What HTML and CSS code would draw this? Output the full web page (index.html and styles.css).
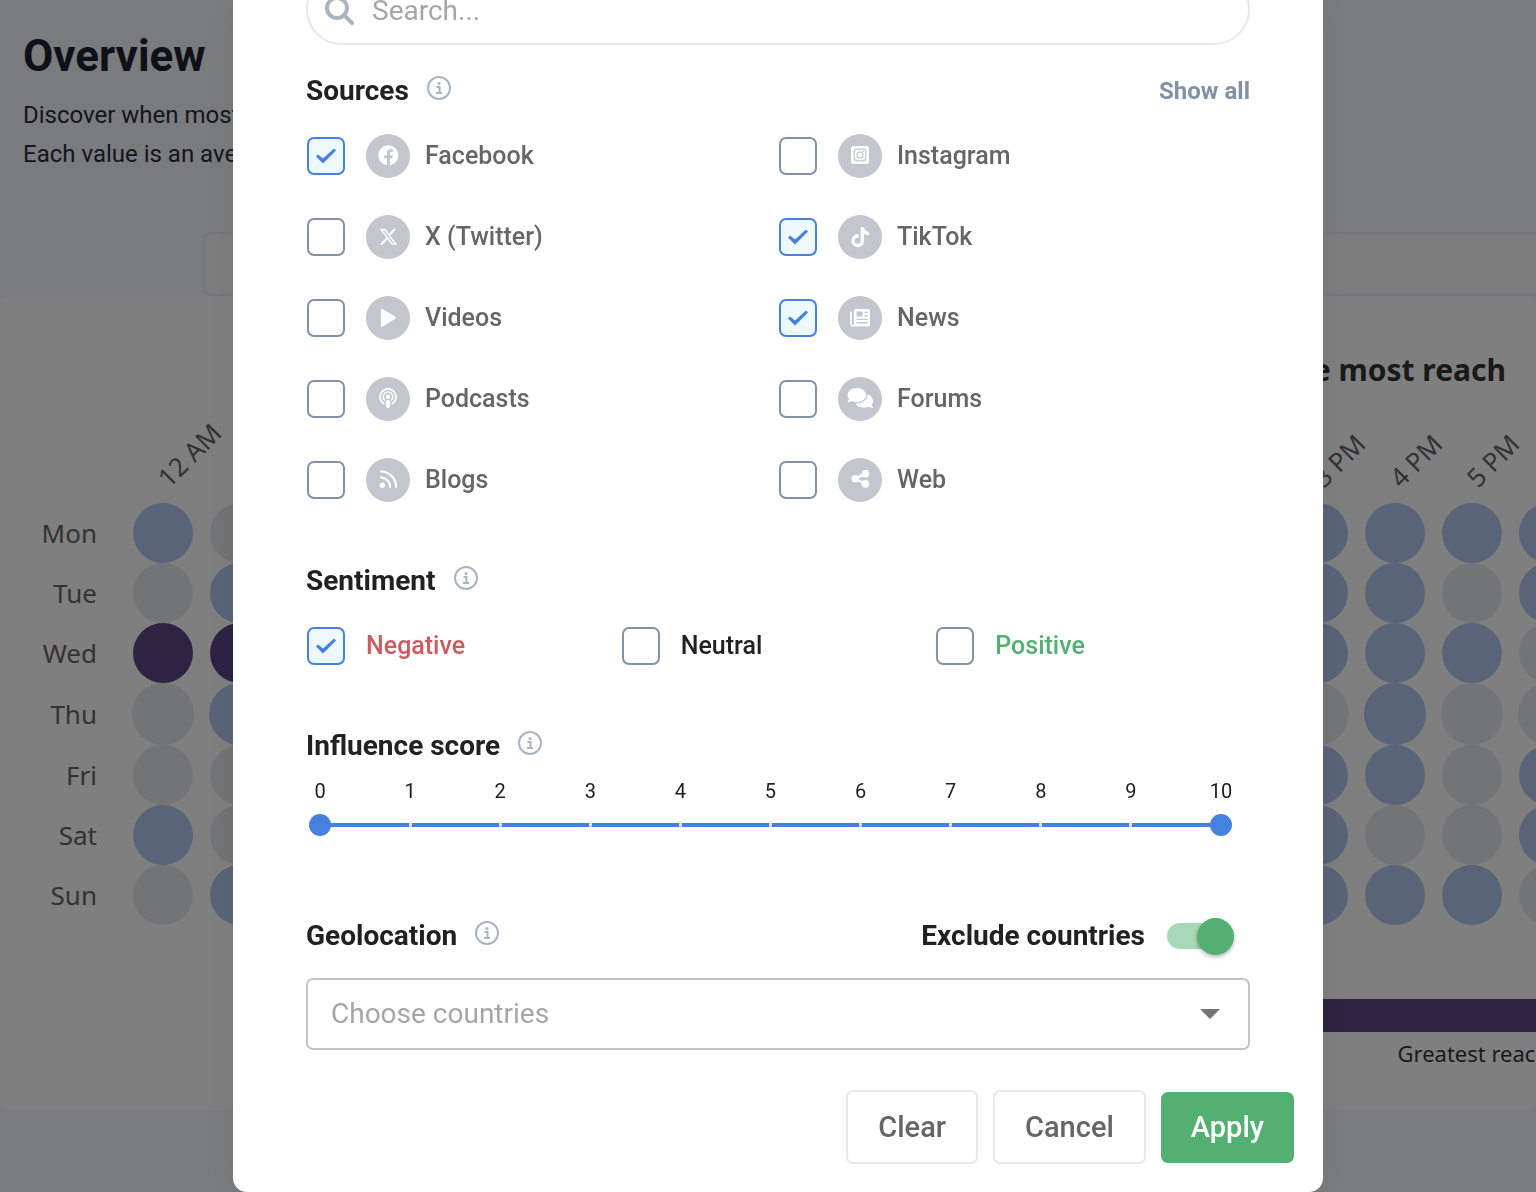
FILE: index.html
```html
<!DOCTYPE html>
<html lang="en">
<head>
<meta charset="utf-8">
<meta name="viewport" content="width=device-width, initial-scale=1">
<title>Overview</title>
<link rel="stylesheet" href="styles.css">
</head>
<body>
<main class="page">
  <header class="page-header">
    <h1 class="page-title">Overview</h1>
    <p class="page-intro">Discover when most<br>Each value is an average</p>
  </header>
  <div class="toolbar"></div>
  <section class="card">
    <h2 class="card-title">the most reach</h2>
    <table class="heatmap">
      <thead>
        <tr><td class="corner"></td><th><span>12 AM</span></th><th><span>1 AM</span></th><th></th><th></th><th></th><th></th><th></th><th></th><th></th><th></th><th></th><th></th><th></th><th></th><th></th><th><span>3 PM</span></th><th><span>4 PM</span></th><th><span>5 PM</span></th><th></th></tr>
      </thead>
      <tbody>
        <tr><th>Mon</th><td class="mid"></td><td></td><td></td><td></td><td></td><td></td><td></td><td></td><td></td><td></td><td></td><td></td><td></td><td></td><td></td><td class="mid"></td><td class="mid"></td><td class="mid"></td><td class="mid"></td></tr>
        <tr><th>Tue</th><td></td><td class="mid"></td><td></td><td></td><td></td><td></td><td></td><td></td><td></td><td></td><td></td><td></td><td></td><td></td><td></td><td class="mid"></td><td class="mid"></td><td></td><td class="mid"></td></tr>
        <tr><th>Wed</th><td class="high"></td><td class="high"></td><td></td><td></td><td></td><td></td><td></td><td></td><td></td><td></td><td></td><td></td><td></td><td></td><td></td><td class="mid"></td><td class="mid"></td><td class="mid"></td><td></td></tr>
        <tr class="today"><th>Thu</th><td></td><td class="mid"></td><td></td><td></td><td></td><td></td><td></td><td></td><td></td><td></td><td></td><td></td><td></td><td></td><td></td><td></td><td class="mid"></td><td></td><td></td></tr>
        <tr><th>Fri</th><td></td><td></td><td></td><td></td><td></td><td></td><td></td><td></td><td></td><td></td><td></td><td></td><td></td><td></td><td></td><td class="mid"></td><td class="mid"></td><td></td><td class="mid"></td></tr>
        <tr><th>Sat</th><td class="mid"></td><td></td><td></td><td></td><td></td><td></td><td></td><td></td><td></td><td></td><td></td><td></td><td></td><td></td><td></td><td class="mid"></td><td></td><td></td><td class="mid"></td></tr>
        <tr><th>Sun</th><td></td><td class="mid"></td><td></td><td></td><td></td><td></td><td></td><td></td><td></td><td></td><td></td><td></td><td></td><td></td><td></td><td class="mid"></td><td class="mid"></td><td class="mid"></td><td></td></tr>
      </tbody>
    </table>
    <div class="legend-bar"></div>
    <p class="legend-label">Greatest reach</p>
  </section>
</main>

<svg class="defs" aria-hidden="true">
  <symbol id="info" viewBox="0 0 26 26">
    <circle cx="13" cy="13" r="11" fill="none" stroke="currentColor" stroke-width="2"/>
    <circle cx="13" cy="8.500" r="1.500" fill="currentColor"/>
    <path d="M10.500 12h3v6M10 18h6" fill="none" stroke="currentColor" stroke-width="2"/>
  </symbol>
</svg>

<div class="overlay">
  <form class="modal" role="dialog" aria-label="Filters">
    <div class="modal-body">
      <label class="search">
        <svg class="search-icon" viewBox="0 0 30 30" aria-hidden="true"><circle cx="12" cy="12" r="10" fill="none" stroke="currentColor" stroke-width="4"/><path d="M19 19l8 8" stroke="currentColor" stroke-width="4" stroke-linecap="round"/></svg>
        <input class="search-input" type="text" placeholder="Search..." aria-label="Search">
      </label>

      <div class="heading sources-heading">
        <h3>Sources</h3>
        <svg class="info"><use href="#info"/></svg>
        <a class="show-all" href="#all">Show all</a>
      </div>
      <div class="sources">
        <label class="option"><input class="check" type="checkbox" checked>
          <svg class="badge" viewBox="0 0 44 44"><path transform="translate(12 11) scale(.0405)" d="M504 256C504 119 393 8 256 8S8 119 8 256c0 123.78 90.69 226.38 209.25 245V327.69h-63V256h63v-54.64c0-62.15 37-96.48 93.67-96.48 27.14 0 55.52 4.84 55.52 4.84v61h-31.28c-30.8 0-40.41 19.12-40.41 38.73V256h68.78l-11 71.69h-57.78V501C413.31 482.38 504 379.78 504 256z"/></svg>
          Facebook</label>
        <label class="option"><input class="check" type="checkbox">
          <svg class="badge" viewBox="0 0 44 44"><rect x="13" y="12" width="18" height="18" rx="2.5"/><g class="cut"><rect x="16.2" y="15.2" width="11.6" height="11.6" rx="3"/><circle cx="22" cy="21" r="3"/><path d="M24.8 17.7h1.2"/></g></svg>
          Instagram</label>
        <label class="option"><input class="check" type="checkbox">
          <svg class="badge" viewBox="0 0 44 44"><path transform="translate(12.5 12) scale(.0385)" d="M389.2 48h70.6L305.6 224.2 487 464H345L233.7 318.6 106.5 464H35.8L200.7 275.5 26.8 48H172.4L272.9 180.9 389.2 48zM364.4 421.8h39.1L151.1 88h-42L364.4 421.8z"/></svg>
          X (Twitter)</label>
        <label class="option"><input class="check" type="checkbox" checked>
          <svg class="badge" viewBox="0 0 44 44"><path transform="translate(13.3 12) scale(.0395)" d="M448 209.91a210.06 210.06 0 0 1-122.77-39.25V349.38A162.55 162.55 0 1 1 185 188.31V278.2a74.62 74.62 0 1 0 52.23 71.18V0l88 0a121.18 121.18 0 0 0 1.86 22.17h0A122.18 122.18 0 0 0 381 102.39a121.43 121.43 0 0 0 67 20.14z"/></svg>
          TikTok</label>
        <label class="option"><input class="check" type="checkbox">
          <svg class="badge" viewBox="0 0 44 44"><path d="M14.8 14.4q0-2 2-1.2l12.4 7.4q1.4 1.2 0 2.4l-12.4 7.5q-2 .8-2-1.2z"/></svg>
          Videos</label>
        <label class="option"><input class="check" type="checkbox" checked>
          <svg class="badge" viewBox="0 0 44 44"><path fill-rule="evenodd" d="M18.200 13H30a2 2 0 0 1 2 2v13.500a2 2 0 0 1-2 2H15a3 3 0 0 1-3-2.500V16.500a.9.9 0 0 1 1.800 0V28a1 1 0 0 0 2 0V15a2 2 0 0 1 2.400-2zM18.500 15.600v4.800h6v-4.800zM26.500 15.700v1.300h3.300v-1.300zM26.500 19.100v1.300h3.300v-1.300zM18.500 22.700v1.300h11.300v-1.300zM18.500 26.100v1.300h11.300v-1.300z"/></svg>
          News</label>
        <label class="option"><input class="check" type="checkbox">
          <svg class="badge" viewBox="0 0 44 44"><g class="line"><path d="M17.800 26.700a8 8 0 1 1 8.400 0" stroke-width="1.700"/><path d="M18.400 23a4.800 4.800 0 1 1 7.200 0" stroke-width="1.600"/></g><circle cx="22" cy="19.700" r="2.300"/><path d="M19.500 25q0-2 2.500-2t2.500 2l-.5 4.500q-.3 1.500-2 1.500t-2-1.500z"/></svg>
          Podcasts</label>
        <label class="option"><input class="check" type="checkbox">
          <svg class="badge" viewBox="0 0 44 44"><path transform="translate(9.500 9.500) scale(.0445)" d="M416 192c0-88.400-93.100-160-208-160S0 103.600 0 192c0 34.300 14.100 65.900 38 92-13.400 30.200-35.500 54.200-35.800 54.500-2.200 2.300-2.800 5.700-1.500 8.700S4.800 352 8 352c36.600 0 66.900-12.300 88.700-25 32.200 15.700 70.300 25 111.300 25 114.900 0 208-71.600 208-160zm122 220c23.900-26 38-57.700 38-92 0-66.900-53.500-124.200-129.300-148.100.9 6.600 1.300 13.300 1.300 20.100 0 105.900-107.700 192-240 192-10.800 0-21.300-.8-31.700-1.900C207.800 439.600 281.800 480 368 480c41 0 79.100-9.200 111.300-25 21.800 12.700 52.100 25 88.700 25 3.200 0 6.100-1.900 7.300-4.800 1.300-2.900.7-6.300-1.500-8.700-.3-.3-22.400-24.200-35.800-54.500z"/></svg>
          Forums</label>
        <label class="option"><input class="check" type="checkbox">
          <svg class="badge" viewBox="0 0 44 44"><circle cx="16.300" cy="27.300" r="2.700"/><g class="line"><path d="M14.800 19.300a9.500 9.500 0 0 1 9.300 9.500" stroke-width="2.200"/><path d="M14.800 13.500a15.300 15.300 0 0 1 15.300 15.300" stroke-width="2.200"/></g></svg>
          Blogs</label>
        <label class="option"><input class="check" type="checkbox">
          <svg class="badge" viewBox="0 0 44 44"><circle cx="17.200" cy="20.700" r="3.700"/><circle cx="27.500" cy="15.700" r="3.800"/><circle cx="27.500" cy="25.900" r="3.800"/><g class="line"><path d="M27.500 15.700l-10.300 5 10.300 5.200" stroke-width="2.400"/></g></svg>
          Web</label>
      </div>

      <div class="heading sentiment-heading">
        <h3>Sentiment</h3>
        <svg class="info"><use href="#info"/></svg>
      </div>
      <div class="sentiments">
        <label class="option negative"><input class="check" type="checkbox" checked>Negative</label>
        <label class="option neutral"><input class="check" type="checkbox">Neutral</label>
        <label class="option positive"><input class="check" type="checkbox">Positive</label>
      </div>

      <div class="heading influence-heading">
        <h3>Influence score</h3>
        <svg class="info"><use href="#info"/></svg>
      </div>
      <div class="scale">
        <span>0</span><span>1</span><span>2</span><span>3</span><span>4</span><span>5</span><span>6</span><span>7</span><span>8</span><span>9</span><span>10</span>
      </div>
      <div class="slider">
        <div class="track"></div>
        <div class="ticks"><i></i><i></i><i></i><i></i><i></i><i></i><i></i><i></i><i></i><i></i><i></i></div>
        <input class="range" type="range" min="0" max="10" value="0" aria-label="Minimum influence score">
        <input class="range" type="range" min="0" max="10" value="10" aria-label="Maximum influence score">
      </div>

      <div class="heading geo-heading">
        <h3>Geolocation</h3>
        <svg class="info"><use href="#info"/></svg>
        <label class="exclude">Exclude countries <input class="switch" type="checkbox" checked></label>
      </div>
      <div class="select-wrap">
        <select class="select" aria-label="Choose countries"><option>Choose countries</option></select>
        <svg class="caret" viewBox="0 0 20 10" aria-hidden="true"><path d="M0 0h20L10 10z"/></svg>
      </div>
    </div>
    <footer class="actions">
      <button class="btn" type="reset">Clear</button>
      <button class="btn" type="button">Cancel</button>
      <button class="btn primary" type="submit">Apply</button>
    </footer>
  </form>
</div>
</body>
</html>
```
FILE: styles.css
```css
* {
  box-sizing: border-box;
}

body {
  margin: 0;
  height: 100vh;
  overflow: hidden;
  background: #f4f6fa;
  color: #212121;
  font-family: Roboto, "Liberation Sans", sans-serif;
}

h1, h2, h3, p {
  margin: 0;
}

.defs {
  position: absolute;
  width: 0;
  height: 0;
}

/* Page behind the dialog */
.page {
  overflow: hidden;
}

.page-header {
  height: 232px;
  padding: 28px 23px 0;
}

.page-title {
  color: #1e2232;
  font-size: 44px;
  line-height: 56px;
}

.page-intro {
  margin-top: 12px;
  color: #2a2d3d;
  font-size: 24px;
  line-height: 39px;
}

.toolbar {
  height: 64px;
  margin-left: 203px;
  border: 2px solid #ebedf2;
  border-right: 0;
  border-radius: 8px 0 0 8px;
  background: #f8f8f8;
}

.card {
  padding: 52px 0 41px;
  overflow: hidden;
  border-radius: 8px;
  background: #fff;
  font-family: "Noto Sans", "Open Sans", sans-serif;
}

.card-title {
  padding-right: 30px;
  color: #333;
  font-size: 30px;
  line-height: 44px;
  text-align: right;
}

.heatmap {
  width: 1587px;
  table-layout: fixed;
  border-collapse: collapse;
  color: #666;
  font-size: 26px;
}

.heatmap td, .heatmap th {
  width: 77px;
  height: 60px;
  padding: 0;
  font-weight: 400;
  line-height: 36px;
}

.heatmap .today td {
  height: 62px;
}

.heatmap .corner, .heatmap tbody th {
  width: 124px;
}

.heatmap tbody th {
  padding-right: 27px;
  text-align: right;
}

.heatmap thead th {
  height: 111px;
  padding-left: 45px;
  text-align: left;
  vertical-align: bottom;
  white-space: nowrap;
}

.heatmap thead span {
  display: block;
  height: 42px;
  transform: rotate(-45deg);
  transform-origin: 0 28px;
}

.heatmap tbody td::before {
  content: "";
  display: block;
  width: 60px;
  height: 60px;
  margin: 0 auto;
  border-radius: 50%;
  background: #e4e8ec;
}

.heatmap .today td::before {
  width: 62px;
  height: 62px;
}

.heatmap tbody .mid::before {
  background: #b4c8f0;
}

.heatmap tbody .high::before {
  background: #5c4684;
}

.legend-bar {
  height: 33px;
  margin: 74px 0 0 400px;
  background: #5c4684;
}

.legend-label {
  margin-right: -13px;
  padding-top: 5px;
  color: #333;
  font-size: 22px;
  line-height: 32px;
  text-align: right;
}

/* Dialog */
.overlay {
  position: fixed;
  inset: 0;
  display: flex;
  justify-content: center;
  align-items: flex-start;
  padding-left: 20px;
  overflow: hidden;
  background: rgba(0, 0, 0, .5);
}

.modal {
  flex: 0 1 1090px;
  padding-bottom: 28px;
  border-radius: 0 0 14px 14px;
  background: #fff;
  box-shadow: 0 0 40px rgba(0, 0, 0, .06);
}

.modal-body {
  padding: 0 73px;
}

.search {
  display: flex;
  align-items: center;
  gap: 17px;
  height: 71px;
  margin-top: -26px;
  padding: 2px 17px 0;
  border: 2px solid #e6e9ee;
  border-radius: 36px;
}

.search-icon {
  width: 30px;
  height: 30px;
  color: #a9b4c2;
}

.search-input {
  flex: 1;
  padding: 0;
  border: 0;
  outline: 0;
  background: none;
  font: 28px/36px Roboto, sans-serif;
}

.search-input::placeholder {
  color: #a6a6a6;
}

.heading {
  display: flex;
  align-items: center;
  height: 32px;
}

.heading h3, .exclude {
  font-size: 28px;
  font-weight: 700;
  line-height: 32px;
}

.info {
  width: 26px;
  height: 26px;
  margin: 0 0 6px 17px;
  color: #a9b4c2;
}

.show-all {
  margin-left: auto;
  color: #8292a6;
  font-size: 24px;
  font-weight: 700;
  text-decoration: none;
}

.sources-heading {
  margin-top: 30px;
}

.sources {
  display: grid;
  grid-template-columns: 1fr 1fr;
  row-gap: 37px;
  margin-top: 27px;
}

.option {
  display: flex;
  align-items: center;
  color: #666;
  font-size: 25px;
  font-weight: 500;
  line-height: 38px;
}

.check {
  appearance: none;
  display: grid;
  place-items: center;
  width: 38px;
  height: 38px;
  margin: 0 21px 0 1px;
  border: 2px solid #8292a8;
  border-radius: 7px;
  background: #fff;
}

.check:checked {
  border-color: #4681e0;
  background: #edf8ff;
}

.check:checked::before {
  content: "";
  width: 20px;
  height: 15px;
  background: #4681e0;
  clip-path: polygon(0 8px, 2px 6px, 7px 10px, 18px 0, 20px 2px, 7px 15px);
}

.badge {
  width: 44px;
  height: 44px;
  margin-right: 15px;
  border-radius: 50%;
  background: #c3c5cf;
  fill: #fff;
}

.badge .cut {
  fill: none;
  stroke: #c3c5cf;
  stroke-width: 1.2px;
}

.badge .line {
  fill: none;
  stroke: #fff;
  stroke-linecap: round;
}

.sentiment-heading {
  margin-top: 63px;
}

.sentiments {
  display: grid;
  grid-template-columns: repeat(3, 1fr);
  margin-top: 30px;
}

.negative {
  color: #cd5c62;
}

.neutral {
  color: #212121;
}

.positive {
  color: #53b072;
}

.influence-heading {
  margin-top: 65px;
}

.scale, .ticks {
  display: flex;
  justify-content: space-between;
}

.scale {
  margin: 17px 18px 0 3px;
  font-size: 20px;
  line-height: 24px;
}

.scale span, .ticks i {
  display: flex;
  justify-content: center;
  width: 22px;
}

.slider {
  display: grid;
  align-items: center;
  height: 22px;
  margin: 11px 18px 0 3px;
}

.slider > * {
  grid-area: 1 / 1;
}

.track {
  height: 4px;
  margin: 0 11px;
  background: #4681e0;
}

.ticks i::before {
  content: "";
  width: 3px;
  height: 4px;
  border-radius: 1px;
  background: #dbe7fa;
}

.range {
  appearance: none;
  width: 100%;
  height: 22px;
  margin: 0;
  background: none;
  pointer-events: none;
}

.range::-webkit-slider-thumb {
  appearance: none;
  width: 22px;
  height: 22px;
  border-radius: 50%;
  background: #4681e0;
  pointer-events: auto;
}

.geo-heading {
  margin-top: 84px;
}

.exclude {
  display: flex;
  align-items: center;
  gap: 22px;
  margin: 0 16px 0 auto;
}

.switch {
  appearance: none;
  display: flex;
  align-items: center;
  justify-content: flex-end;
  width: 67px;
  height: 26px;
  margin: 0;
  border-radius: 13px;
  background: #a7d8b7;
}

.switch::before {
  content: "";
  width: 37px;
  height: 37px;
  flex: none;
  border-radius: 50%;
  background: #53b072;
  box-shadow: 0 2px 4px rgba(0, 0, 0, .3);
}

.select-wrap {
  display: grid;
  align-items: center;
  margin-top: 26px;
}

.select, .caret {
  grid-area: 1 / 1;
}

.select {
  appearance: none;
  height: 72px;
  padding: 0 23px;
  border: 2px solid #c4c4c4;
  border-radius: 7px;
  background: #fff;
  color: #a6a6a6;
  font: 28px/36px Roboto, sans-serif;
}

.caret {
  justify-self: end;
  width: 20px;
  height: 10px;
  margin-right: 30px;
  fill: #757575;
  pointer-events: none;
}

.actions {
  display: flex;
  justify-content: flex-end;
  align-items: center;
  gap: 15px;
  margin-top: 40px;
  padding-right: 29px;
}

.btn {
  height: 74px;
  padding: 0 30px;
  border: 2px solid #e6e9ee;
  border-radius: 7px;
  background: #fff;
  color: #666;
  font: 500 29px/36px Roboto, sans-serif;
}

.primary {
  height: 71px;
  border: 0;
  background: #53b072;
  color: #fff;
}
```
